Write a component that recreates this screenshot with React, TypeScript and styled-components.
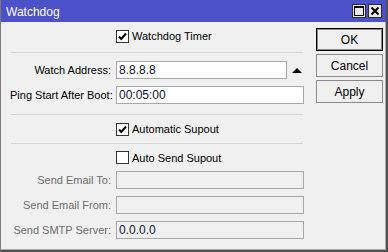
import React from "react";
import styled, { createGlobalStyle } from "styled-components";

const GlobalStyle = createGlobalStyle`
  html, body { margin: 0; padding: 0; background: #f0f0f0; }
  body { font-family: "Liberation Sans", Arial, sans-serif; font-size: 11px; color: #000; }
  * { box-sizing: border-box; }
`;

const Window = styled.div`
  width: 388px;
  height: 252px;
  display: flex;
  flex-direction: column;
  background: #f0f0f0;
  border-left: 1px solid #7b7b7b;
  border-right: 2px solid #505050;
  border-bottom: 2px solid #505050;
  box-shadow: inset -1px -1px 0 #a8a8a8;
`;

const TitleBar = styled.div`
  height: 22px;
  flex: none;
  background: #4c50c9;
  display: flex;
  align-items: center;
  padding: 0 4px 0 5px;
  color: #fff;
  font-size: 12px;
`;

const TitleText = styled.div`
  flex: 1;
  padding-top: 1px;
`;

const TitleButton = styled.div`
  width: 14px;
  height: 14px;
  margin-left: 2px;
  background: #e9e9e9;
  border: 1px solid #2a2a2a;
  display: flex;
  align-items: center;
  justify-content: center;
`;

const Body = styled.div`
  flex: 1;
  display: flex;
`;

const Form = styled.div`
  width: 312px;
  padding: 1px 0 0 9px;
  display: flex;
  flex-direction: column;
`;

const CheckRow = styled.label<{ $h?: number }>`
  height: ${(p) => p.$h ?? 26}px;
  display: flex;
  align-items: center;
  padding-left: 106px;
  gap: 3px;
`;

const Box = styled.span`
  width: 13px;
  height: 13px;
  background: #fff;
  border: 1px solid #333;
  display: flex;
  align-items: center;
  justify-content: center;
`;

const Separator = styled.div<{ $mt: number; $mb: number }>`
  height: 1px;
  width: 292px;
  margin: ${(p) => p.$mt}px 0 ${(p) => p.$mb}px 1px;
  background: #d9d9d9;
`;

const FieldRow = styled.div`
  height: 18px;
  margin-bottom: 7px;
  display: flex;
  align-items: center;
`;

const Label = styled.div<{ $disabled?: boolean }>`
  width: 101px;
  text-align: right;
  white-space: nowrap;
  margin-right: 5px;
  color: ${(p) => (p.$disabled ? "#6d6d6d" : "#000")};
`;

const Input = styled.div<{ $w: number; $disabled?: boolean }>`
  width: ${(p) => p.$w}px;
  height: 18px;
  border: 1px solid #a8a8a8;
  background: ${(p) => (p.$disabled ? "#f0f0f0" : "#fff")};
  padding: 0 2px;
  display: flex;
  align-items: center;
  font-size: 12px;
  color: #101030;
`;

const Arrow = styled.div`
  margin-left: 5px;
  width: 0;
  height: 0;
  border-left: 5px solid transparent;
  border-right: 5px solid transparent;
  border-bottom: 5px solid #000;
`;

const Buttons = styled.div`
  display: flex;
  flex-direction: column;
  gap: 3px;
  padding: 6px 0 0 3px;
`;

const Button = styled.div<{ $default?: boolean }>`
  width: 67px;
  height: 23px;
  display: flex;
  align-items: center;
  justify-content: center;
  font-size: 12px;
  background: #f0f0f0;
  border: 1px solid ${(p) => (p.$default ? "#000" : "#8a8a8a")};
  box-shadow: ${(p) => (p.$default ? "inset 0 0 0 1px #8a8a8a" : "none")};
`;

const Check = () => (
  <svg width="9" height="9" viewBox="0 0 9 9">
    <path d="M1 4.5 L3.3 7 L8 1.5" stroke="#000" strokeWidth="2" fill="none" />
  </svg>
);

const CheckBox: React.FC<{ checked?: boolean; label: string; h?: number }> = ({ checked, label, h }) => (
  <CheckRow $h={h}>
    <Box>{checked && <Check />}</Box>
    <span>{label}</span>
  </CheckRow>
);

export default function App() {
  return (
    <>
      <GlobalStyle />
      <Window>
        <TitleBar>
          <TitleText>Watchdog</TitleText>
          <TitleButton>
            <svg width="10" height="10" viewBox="0 0 10 10">
              <rect x="0.5" y="0.5" width="9" height="9" stroke="#000" strokeWidth="1" fill="none" />
              <rect x="0" y="0" width="10" height="2" fill="#000" />
            </svg>
          </TitleButton>
          <TitleButton>
            <svg width="10" height="10" viewBox="0 0 10 10">
              <path d="M1.5 1.5 L8.5 8.5 M8.5 1.5 L1.5 8.5" stroke="#000" strokeWidth="2" />
            </svg>
          </TitleButton>
        </TitleBar>
        <Body>
          <Form>
            <CheckBox checked label="Watchdog Timer" />
            <Separator $mt={3} $mb={8} />
            <FieldRow>
              <Label>Watch Address:</Label>
              <Input $w={171}>8.8.8.8</Input>
              <Arrow />
            </FieldRow>
            <FieldRow>
              <Label>Ping Start After Boot:</Label>
              <Input $w={188}>00:05:00</Input>
            </FieldRow>
            <Separator $mt={3} $mb={0} />
            <CheckBox checked label="Automatic Supout" h={28} />
            <Separator $mt={0} $mb={0} />
            <CheckBox label="Auto Send Supout" h={27} />
            <FieldRow>
              <Label $disabled>Send Email To:</Label>
              <Input $w={188} $disabled />
            </FieldRow>
            <FieldRow>
              <Label $disabled>Send Email From:</Label>
              <Input $w={188} $disabled />
            </FieldRow>
            <FieldRow>
              <Label $disabled>Send SMTP Server:</Label>
              <Input $w={188} $disabled>0.0.0.0</Input>
            </FieldRow>
          </Form>
          <Buttons>
            <Button $default>OK</Button>
            <Button>Cancel</Button>
            <Button>Apply</Button>
          </Buttons>
        </Body>
      </Window>
    </>
  );
}
